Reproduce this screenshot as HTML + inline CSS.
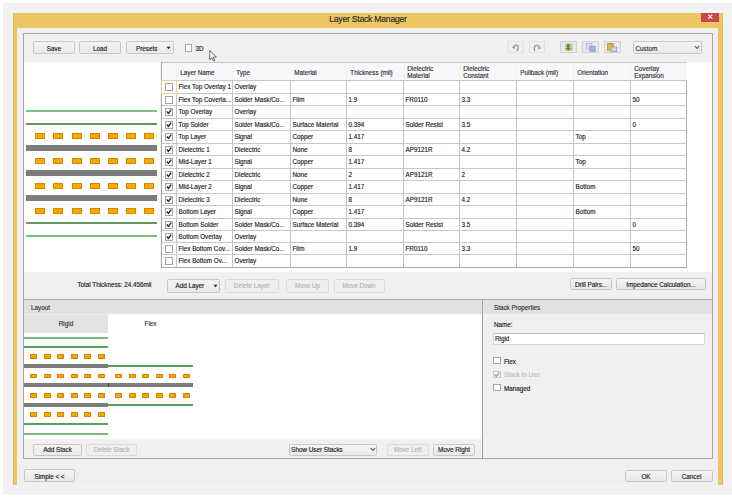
<!DOCTYPE html><html><head><meta charset="utf-8"><style>
*{margin:0;padding:0;box-sizing:border-box}
html,body{width:732px;height:501px;overflow:hidden;background:#fff;font-family:"Liberation Sans",sans-serif}
div{position:absolute}
.t{white-space:nowrap;font-size:6.3px;line-height:8px;color:#222;-webkit-text-stroke:0.15px currentColor}
</style></head><body>
<div style="left:3px;top:3px;width:729px;height:492px;background:#f2f2f2"></div>
<div style="left:13px;top:13px;width:710px;height:472px;background:#edc562"></div>
<div style="left:13px;top:13px;width:1px;height:472px;background:#dfb75d"></div>
<div style="left:722px;top:22px;width:1px;height:463px;background:#dfb75d"></div>
<div style="left:17px;top:28px;width:701px;height:457px;background:#f0f0f0"></div>
<div class="t" style="left:13px;top:14.5px;width:710px;text-align:center;font-size:8.6px;letter-spacing:-0.22px;line-height:9px;color:#2a2a2a">Layer Stack Manager</div>
<div style="left:701px;top:13px;width:18px;height:9px;background:#c9464c"></div>
<svg style="position:absolute;left:701px;top:13px" width="18" height="9" viewBox="0 0 18 9"><path d="M7.3 1.6 L11.3 5.6 M11.3 1.6 L7.3 5.6" stroke="#fff" stroke-width="1.2"/></svg>
<div style="left:33px;top:41px;width:42px;height:12.5px;border:1px solid #c8c8c8;background:linear-gradient(#f4f4f4,#e8e8e8);border-radius:1.5px"></div>
<div class="t" style="left:33px;width:42px;text-align:center;top:45px;color:#222">Save</div>
<div style="left:79px;top:41px;width:42px;height:12.5px;border:1px solid #c8c8c8;background:linear-gradient(#f4f4f4,#e8e8e8);border-radius:1.5px"></div>
<div class="t" style="left:79px;width:42px;text-align:center;top:45px;color:#222">Load</div>
<div style="left:125.5px;top:41px;width:48.5px;height:12.5px;border:1px solid #c8c8c8;background:linear-gradient(#f4f4f4,#e8e8e8);border-radius:1.5px"></div>
<div class="t" style="left:136px;top:45px;color:#222">Presets</div>
<svg style="position:absolute;left:166px;top:46px" width="5" height="4" viewBox="0 0 5 4"><path d="M0.5 0.8 L4.5 0.8 L2.5 3.2 Z" fill="#222"/></svg>
<div style="left:185px;top:44.2px;width:7.2px;height:7.5px;border:1px solid #a4a4a4;background:#fff"></div>
<div class="t" style="left:195.5px;top:45px;">3D</div>
<svg style="position:absolute;left:209px;top:48.5px" width="10" height="14" viewBox="0 0 10 14"><path d="M0.8 1.4 L0.8 10.8 L3 8.8 L4.6 12 L5.8 11.4 L4.3 8.2 L7.3 8 Z" fill="#fafafa" stroke="#3a3a3a" stroke-width="0.75"/></svg>
<div style="left:507px;top:41px;width:16.5px;height:12.3px;border:1px solid #e2e2e2;background:#efefef"></div>
<div style="left:528.5px;top:41px;width:16.5px;height:12.3px;border:1px solid #e2e2e2;background:#efefef"></div>
<svg style="position:absolute;left:507px;top:41px" width="17" height="12" viewBox="0 0 17 12"><path d="M7 5.4 C8.4 3.6 11.4 3.4 11.4 6.3 C11.4 8 10.8 9.1 9.7 10" fill="none" stroke="#999" stroke-width="1.4"/><path d="M4.9 6.6 L7.9 4.3 L8.1 8.1 Z" fill="#999"/></svg>
<svg style="position:absolute;left:528.5px;top:41px" width="17" height="12" viewBox="0 0 17 12"><path d="M5.9 10 C5 8.4 5 4.3 7.7 4.1 C9.4 4 10.1 5.1 10.5 6.2" fill="none" stroke="#999" stroke-width="1.4"/><path d="M11.6 8 L8.8 7.5 L11.1 4.7 Z" fill="#999"/></svg>
<div style="left:560px;top:41.2px;width:17px;height:12.2px;border:1px solid #d2d2d2;background:#e9e9e9"></div>
<div style="left:581.5px;top:41.2px;width:17px;height:12.2px;border:1px solid #d2d2d2;background:#e9e9e9"></div>
<div style="left:603.5px;top:41.2px;width:17px;height:12.2px;border:1px solid #d2d2d2;background:#e9e9e9"></div>
<svg style="position:absolute;left:560px;top:41.2px" width="17" height="12" viewBox="0 0 17 12"><rect x="5" y="2.3" width="7.5" height="7.6" fill="#c3d0de"/><rect x="9.2" y="2.6" width="3.2" height="2.6" fill="#e6c556"/><rect x="9.2" y="6.6" width="3.2" height="3" fill="#dcbc4c"/><rect x="5.2" y="6.8" width="2.4" height="2.8" fill="#e0c050"/><path d="M5.6 5.4 L8.2 2.4 L10.8 5.4 L9.3 5.4 L9.3 7 L10.8 7 L8.2 10 L5.6 7 L7.1 7 L7.1 5.4 Z" fill="#3d9c3d"/></svg>
<svg style="position:absolute;left:581.5px;top:41.2px" width="17" height="12" viewBox="0 0 17 12"><rect x="4.3" y="2.4" width="5.6" height="5.8" fill="#d4e0f4" stroke="#a4bade" stroke-width="0.7"/><rect x="7.8" y="5.2" width="5.4" height="5" fill="#98b8ea" stroke="#7094d0" stroke-width="0.7"/></svg>
<svg style="position:absolute;left:603.5px;top:41.2px" width="17" height="12" viewBox="0 0 17 12"><rect x="3.4" y="2.6" width="6.2" height="6.6" fill="#e6b636" stroke="#bb8e24" stroke-width="0.6"/><rect x="4.9" y="1.9" width="3.2" height="1.4" fill="#8d8d8d"/><rect x="7" y="6" width="5.8" height="4.4" fill="#d2dae8" stroke="#8392b0" stroke-width="0.7"/></svg>
<div style="left:633px;top:41px;width:69px;height:12.5px;border:1px solid #c8c8c8;background:linear-gradient(#f4f4f4,#e8e8e8);border-radius:1.5px"></div>
<div class="t" style="left:635.5px;top:45px;color:#333">Custom</div>
<svg style="position:absolute;left:694px;top:45.4px" width="6" height="5" viewBox="0 0 6 5"><path d="M0.8 1 L3 3.4 L5.2 1" fill="none" stroke="#555" stroke-width="1.1"/></svg>
<div style="left:24px;top:62px;width:688px;height:210px;background:#fff"></div>
<div style="left:159.5px;top:62px;width:1.5px;height:210px;background:#f6f6f6"></div>
<div style="left:26px;top:110px;width:130.5px;height:2px;background:#79c47a"></div>
<div style="left:26px;top:122.5px;width:130.5px;height:2px;background:#5d9b60"></div>
<div style="left:35px;top:133.2px;width:9.5px;height:6px;background:#ffa500;border:0.6px solid #cf8a00"></div>
<div style="left:53px;top:133.2px;width:9.5px;height:6px;background:#ffa500;border:0.6px solid #cf8a00"></div>
<div style="left:72px;top:133.2px;width:9.5px;height:6px;background:#ffa500;border:0.6px solid #cf8a00"></div>
<div style="left:90px;top:133.2px;width:9.5px;height:6px;background:#ffa500;border:0.6px solid #cf8a00"></div>
<div style="left:108px;top:133.2px;width:9.5px;height:6px;background:#ffa500;border:0.6px solid #cf8a00"></div>
<div style="left:126px;top:133.2px;width:9.5px;height:6px;background:#ffa500;border:0.6px solid #cf8a00"></div>
<div style="left:144px;top:133.2px;width:9.5px;height:6px;background:#ffa500;border:0.6px solid #cf8a00"></div>
<div style="left:35px;top:158px;width:9.5px;height:6px;background:#ffa500;border:0.6px solid #cf8a00"></div>
<div style="left:53px;top:158px;width:9.5px;height:6px;background:#ffa500;border:0.6px solid #cf8a00"></div>
<div style="left:72px;top:158px;width:9.5px;height:6px;background:#ffa500;border:0.6px solid #cf8a00"></div>
<div style="left:90px;top:158px;width:9.5px;height:6px;background:#ffa500;border:0.6px solid #cf8a00"></div>
<div style="left:108px;top:158px;width:9.5px;height:6px;background:#ffa500;border:0.6px solid #cf8a00"></div>
<div style="left:126px;top:158px;width:9.5px;height:6px;background:#ffa500;border:0.6px solid #cf8a00"></div>
<div style="left:144px;top:158px;width:9.5px;height:6px;background:#ffa500;border:0.6px solid #cf8a00"></div>
<div style="left:35px;top:183px;width:9.5px;height:6px;background:#ffa500;border:0.6px solid #cf8a00"></div>
<div style="left:53px;top:183px;width:9.5px;height:6px;background:#ffa500;border:0.6px solid #cf8a00"></div>
<div style="left:72px;top:183px;width:9.5px;height:6px;background:#ffa500;border:0.6px solid #cf8a00"></div>
<div style="left:90px;top:183px;width:9.5px;height:6px;background:#ffa500;border:0.6px solid #cf8a00"></div>
<div style="left:108px;top:183px;width:9.5px;height:6px;background:#ffa500;border:0.6px solid #cf8a00"></div>
<div style="left:126px;top:183px;width:9.5px;height:6px;background:#ffa500;border:0.6px solid #cf8a00"></div>
<div style="left:144px;top:183px;width:9.5px;height:6px;background:#ffa500;border:0.6px solid #cf8a00"></div>
<div style="left:35px;top:207.8px;width:9.5px;height:6px;background:#ffa500;border:0.6px solid #cf8a00"></div>
<div style="left:53px;top:207.8px;width:9.5px;height:6px;background:#ffa500;border:0.6px solid #cf8a00"></div>
<div style="left:72px;top:207.8px;width:9.5px;height:6px;background:#ffa500;border:0.6px solid #cf8a00"></div>
<div style="left:90px;top:207.8px;width:9.5px;height:6px;background:#ffa500;border:0.6px solid #cf8a00"></div>
<div style="left:108px;top:207.8px;width:9.5px;height:6px;background:#ffa500;border:0.6px solid #cf8a00"></div>
<div style="left:126px;top:207.8px;width:9.5px;height:6px;background:#ffa500;border:0.6px solid #cf8a00"></div>
<div style="left:144px;top:207.8px;width:9.5px;height:6px;background:#ffa500;border:0.6px solid #cf8a00"></div>
<div style="left:26px;top:145.3px;width:130.5px;height:6px;background:#7c7c7c"></div>
<div style="left:26px;top:170.1px;width:130.5px;height:6px;background:#7c7c7c"></div>
<div style="left:26px;top:195.3px;width:130.5px;height:6px;background:#7c7c7c"></div>
<div style="left:26px;top:222px;width:130.5px;height:2px;background:#5d9b60"></div>
<div style="left:26px;top:234.7px;width:130.5px;height:2px;background:#79c47a"></div>
<div style="left:161px;top:62px;width:526px;height:18px;background:#f8f8fa"></div>
<div style="left:176px;top:62px;width:1px;height:18px;background:#efeff4"></div>
<div style="left:232px;top:62px;width:1px;height:18px;background:#efeff4"></div>
<div style="left:290px;top:62px;width:1px;height:18px;background:#efeff4"></div>
<div style="left:346px;top:62px;width:1px;height:18px;background:#efeff4"></div>
<div style="left:403px;top:62px;width:1px;height:18px;background:#efeff4"></div>
<div style="left:459px;top:62px;width:1px;height:18px;background:#efeff4"></div>
<div style="left:516px;top:62px;width:1px;height:18px;background:#efeff4"></div>
<div style="left:573px;top:62px;width:1px;height:18px;background:#efeff4"></div>
<div style="left:630px;top:62px;width:1px;height:18px;background:#efeff4"></div>
<div style="left:161px;top:62px;width:526px;height:1px;background:#c9c9c9"></div>
<div style="left:161px;top:80px;width:526px;height:1px;background:#c6c6ce"></div>
<div style="left:176px;top:81px;width:1px;height:186px;background:#c4c4c4"></div>
<div style="left:232px;top:81px;width:1px;height:186px;background:#c4c4c4"></div>
<div style="left:290px;top:81px;width:1px;height:186px;background:#c4c4c4"></div>
<div style="left:346px;top:81px;width:1px;height:186px;background:#c4c4c4"></div>
<div style="left:403px;top:81px;width:1px;height:186px;background:#c4c4c4"></div>
<div style="left:459px;top:81px;width:1px;height:186px;background:#c4c4c4"></div>
<div style="left:516px;top:81px;width:1px;height:186px;background:#c4c4c4"></div>
<div style="left:573px;top:81px;width:1px;height:186px;background:#c4c4c4"></div>
<div style="left:630px;top:81px;width:1px;height:186px;background:#c4c4c4"></div>
<div style="left:161px;top:93px;width:526px;height:1px;background:#c8c8c8"></div>
<div style="left:161px;top:105px;width:526px;height:1px;background:#c8c8c8"></div>
<div style="left:161px;top:118px;width:526px;height:1px;background:#c8c8c8"></div>
<div style="left:161px;top:130px;width:526px;height:1px;background:#c8c8c8"></div>
<div style="left:161px;top:143px;width:526px;height:1px;background:#c8c8c8"></div>
<div style="left:161px;top:155px;width:526px;height:1px;background:#c8c8c8"></div>
<div style="left:161px;top:168px;width:526px;height:1px;background:#c8c8c8"></div>
<div style="left:161px;top:180px;width:526px;height:1px;background:#c8c8c8"></div>
<div style="left:161px;top:193px;width:526px;height:1px;background:#c8c8c8"></div>
<div style="left:161px;top:205px;width:526px;height:1px;background:#c8c8c8"></div>
<div style="left:161px;top:218px;width:526px;height:1px;background:#c8c8c8"></div>
<div style="left:161px;top:230px;width:526px;height:1px;background:#c8c8c8"></div>
<div style="left:161px;top:242px;width:526px;height:1px;background:#c8c8c8"></div>
<div style="left:161px;top:254px;width:526px;height:1px;background:#c8c8c8"></div>
<div style="left:161px;top:62px;width:1px;height:206px;background:#a6a6a6"></div>
<div style="left:686px;top:80px;width:1px;height:188px;background:#b0b0b0"></div>
<div style="left:161px;top:267px;width:526px;height:1px;background:#aaaaaa"></div>
<div class="t" style="left:180.3px;top:69px;color:#333">Layer Name</div>
<div class="t" style="left:236.3px;top:69px;color:#333">Type</div>
<div class="t" style="left:294.3px;top:69px;color:#333">Material</div>
<div class="t" style="left:350.3px;top:69px;color:#333">Thickness (mil)</div>
<div class="t" style="left:407.3px;top:65px;line-height:7.4px;color:#333">Dielectric<br>Material</div>
<div class="t" style="left:463.3px;top:65px;line-height:7.4px;color:#333">Dielectric<br>Constant</div>
<div class="t" style="left:520.3px;top:69px;color:#333">Pullback (mil)</div>
<div class="t" style="left:577.3px;top:69px;color:#333">Orientation</div>
<div class="t" style="left:634.3px;top:65px;line-height:7.4px;color:#333">Coverlay<br>Expansion</div>
<div style="left:161px;top:80px;width:16px;height:14px;border:1px solid #ebd493"></div>
<div style="left:165px;top:83px;width:7.5px;height:7.5px;border:1px solid #a4a4a4;background:#fff"></div>
<div class="t" style="left:178.5px;top:83px;">Flex Top Overlay 1</div>
<div class="t" style="left:234.5px;top:83px;">Overlay</div>
<div style="left:165px;top:96px;width:7.5px;height:7.5px;border:1px solid #a4a4a4;background:#fff"></div>
<div class="t" style="left:178.5px;top:96px;">Flex Top Coverla...</div>
<div class="t" style="left:234.5px;top:96px;">Solder Mask/Co...</div>
<div class="t" style="left:292.5px;top:96px;">Film</div>
<div class="t" style="left:348.5px;top:96px;">1.9</div>
<div class="t" style="left:405.5px;top:96px;">FR0110</div>
<div class="t" style="left:461.5px;top:96px;">3.3</div>
<div class="t" style="left:632.5px;top:96px;">50</div>
<div style="left:165px;top:108px;width:7.5px;height:7.5px;border:1px solid #a4a4a4;background:#fff"></div>
<svg style="position:absolute;left:165px;top:108px" width="8" height="8" viewBox="0 0 8 8"><path d="M1.8 3.6 L3.4 5.3 L6.2 1.6" fill="none" stroke="#2a2a2a" stroke-width="1.4"/></svg>
<div class="t" style="left:178.5px;top:108px;">Top Overlay</div>
<div class="t" style="left:234.5px;top:108px;">Overlay</div>
<div style="left:165px;top:121px;width:7.5px;height:7.5px;border:1px solid #a4a4a4;background:#fff"></div>
<svg style="position:absolute;left:165px;top:121px" width="8" height="8" viewBox="0 0 8 8"><path d="M1.8 3.6 L3.4 5.3 L6.2 1.6" fill="none" stroke="#2a2a2a" stroke-width="1.4"/></svg>
<div class="t" style="left:178.5px;top:121px;">Top Solder</div>
<div class="t" style="left:234.5px;top:121px;">Solder Mask/Co...</div>
<div class="t" style="left:292.5px;top:121px;">Surface Material</div>
<div class="t" style="left:348.5px;top:121px;">0.394</div>
<div class="t" style="left:405.5px;top:121px;">Solder Resist</div>
<div class="t" style="left:461.5px;top:121px;">3.5</div>
<div class="t" style="left:632.5px;top:121px;">0</div>
<div style="left:165px;top:133px;width:7.5px;height:7.5px;border:1px solid #a4a4a4;background:#fff"></div>
<svg style="position:absolute;left:165px;top:133px" width="8" height="8" viewBox="0 0 8 8"><path d="M1.8 3.6 L3.4 5.3 L6.2 1.6" fill="none" stroke="#2a2a2a" stroke-width="1.4"/></svg>
<div class="t" style="left:178.5px;top:133px;">Top Layer</div>
<div class="t" style="left:234.5px;top:133px;">Signal</div>
<div class="t" style="left:292.5px;top:133px;">Copper</div>
<div class="t" style="left:348.5px;top:133px;">1.417</div>
<div class="t" style="left:575.5px;top:133px;">Top</div>
<div style="left:165px;top:146px;width:7.5px;height:7.5px;border:1px solid #a4a4a4;background:#fff"></div>
<svg style="position:absolute;left:165px;top:146px" width="8" height="8" viewBox="0 0 8 8"><path d="M1.8 3.6 L3.4 5.3 L6.2 1.6" fill="none" stroke="#2a2a2a" stroke-width="1.4"/></svg>
<div class="t" style="left:178.5px;top:146px;">Dielectric 1</div>
<div class="t" style="left:234.5px;top:146px;">Dielectric</div>
<div class="t" style="left:292.5px;top:146px;">None</div>
<div class="t" style="left:348.5px;top:146px;">8</div>
<div class="t" style="left:405.5px;top:146px;">AP9121R</div>
<div class="t" style="left:461.5px;top:146px;">4.2</div>
<div style="left:165px;top:158px;width:7.5px;height:7.5px;border:1px solid #a4a4a4;background:#fff"></div>
<svg style="position:absolute;left:165px;top:158px" width="8" height="8" viewBox="0 0 8 8"><path d="M1.8 3.6 L3.4 5.3 L6.2 1.6" fill="none" stroke="#2a2a2a" stroke-width="1.4"/></svg>
<div class="t" style="left:178.5px;top:158px;">Mid-Layer 1</div>
<div class="t" style="left:234.5px;top:158px;">Signal</div>
<div class="t" style="left:292.5px;top:158px;">Copper</div>
<div class="t" style="left:348.5px;top:158px;">1.417</div>
<div class="t" style="left:575.5px;top:158px;">Top</div>
<div style="left:165px;top:171px;width:7.5px;height:7.5px;border:1px solid #a4a4a4;background:#fff"></div>
<svg style="position:absolute;left:165px;top:171px" width="8" height="8" viewBox="0 0 8 8"><path d="M1.8 3.6 L3.4 5.3 L6.2 1.6" fill="none" stroke="#2a2a2a" stroke-width="1.4"/></svg>
<div class="t" style="left:178.5px;top:171px;">Dielectric 2</div>
<div class="t" style="left:234.5px;top:171px;">Dielectric</div>
<div class="t" style="left:292.5px;top:171px;">None</div>
<div class="t" style="left:348.5px;top:171px;">2</div>
<div class="t" style="left:405.5px;top:171px;">AP9121R</div>
<div class="t" style="left:461.5px;top:171px;">2</div>
<div style="left:165px;top:183px;width:7.5px;height:7.5px;border:1px solid #a4a4a4;background:#fff"></div>
<svg style="position:absolute;left:165px;top:183px" width="8" height="8" viewBox="0 0 8 8"><path d="M1.8 3.6 L3.4 5.3 L6.2 1.6" fill="none" stroke="#2a2a2a" stroke-width="1.4"/></svg>
<div class="t" style="left:178.5px;top:183px;">Mid-Layer 2</div>
<div class="t" style="left:234.5px;top:183px;">Signal</div>
<div class="t" style="left:292.5px;top:183px;">Copper</div>
<div class="t" style="left:348.5px;top:183px;">1.417</div>
<div class="t" style="left:575.5px;top:183px;">Bottom</div>
<div style="left:165px;top:196px;width:7.5px;height:7.5px;border:1px solid #a4a4a4;background:#fff"></div>
<svg style="position:absolute;left:165px;top:196px" width="8" height="8" viewBox="0 0 8 8"><path d="M1.8 3.6 L3.4 5.3 L6.2 1.6" fill="none" stroke="#2a2a2a" stroke-width="1.4"/></svg>
<div class="t" style="left:178.5px;top:196px;">Dielectric 3</div>
<div class="t" style="left:234.5px;top:196px;">Dielectric</div>
<div class="t" style="left:292.5px;top:196px;">None</div>
<div class="t" style="left:348.5px;top:196px;">8</div>
<div class="t" style="left:405.5px;top:196px;">AP9121R</div>
<div class="t" style="left:461.5px;top:196px;">4.2</div>
<div style="left:165px;top:208px;width:7.5px;height:7.5px;border:1px solid #a4a4a4;background:#fff"></div>
<svg style="position:absolute;left:165px;top:208px" width="8" height="8" viewBox="0 0 8 8"><path d="M1.8 3.6 L3.4 5.3 L6.2 1.6" fill="none" stroke="#2a2a2a" stroke-width="1.4"/></svg>
<div class="t" style="left:178.5px;top:208px;">Bottom Layer</div>
<div class="t" style="left:234.5px;top:208px;">Signal</div>
<div class="t" style="left:292.5px;top:208px;">Copper</div>
<div class="t" style="left:348.5px;top:208px;">1.417</div>
<div class="t" style="left:575.5px;top:208px;">Bottom</div>
<div style="left:165px;top:221px;width:7.5px;height:7.5px;border:1px solid #a4a4a4;background:#fff"></div>
<svg style="position:absolute;left:165px;top:221px" width="8" height="8" viewBox="0 0 8 8"><path d="M1.8 3.6 L3.4 5.3 L6.2 1.6" fill="none" stroke="#2a2a2a" stroke-width="1.4"/></svg>
<div class="t" style="left:178.5px;top:221px;">Bottom Solder</div>
<div class="t" style="left:234.5px;top:221px;">Solder Mask/Co...</div>
<div class="t" style="left:292.5px;top:221px;">Surface Material</div>
<div class="t" style="left:348.5px;top:221px;">0.394</div>
<div class="t" style="left:405.5px;top:221px;">Solder Resist</div>
<div class="t" style="left:461.5px;top:221px;">3.5</div>
<div class="t" style="left:632.5px;top:221px;">0</div>
<div style="left:165px;top:233px;width:7.5px;height:7.5px;border:1px solid #a4a4a4;background:#fff"></div>
<svg style="position:absolute;left:165px;top:233px" width="8" height="8" viewBox="0 0 8 8"><path d="M1.8 3.6 L3.4 5.3 L6.2 1.6" fill="none" stroke="#2a2a2a" stroke-width="1.4"/></svg>
<div class="t" style="left:178.5px;top:233px;">Bottom Overlay</div>
<div class="t" style="left:234.5px;top:233px;">Overlay</div>
<div style="left:165px;top:245px;width:7.5px;height:7.5px;border:1px solid #a4a4a4;background:#fff"></div>
<div class="t" style="left:178.5px;top:245px;">Flex Bottom Cov...</div>
<div class="t" style="left:234.5px;top:245px;">Solder Mask/Co...</div>
<div class="t" style="left:292.5px;top:245px;">Film</div>
<div class="t" style="left:348.5px;top:245px;">1.9</div>
<div class="t" style="left:405.5px;top:245px;">FR0110</div>
<div class="t" style="left:461.5px;top:245px;">3.3</div>
<div class="t" style="left:632.5px;top:245px;">50</div>
<div style="left:165px;top:257px;width:7.5px;height:7.5px;border:1px solid #a4a4a4;background:#fff"></div>
<div class="t" style="left:178.5px;top:257px;">Flex Bottom Ov...</div>
<div class="t" style="left:234.5px;top:257px;">Overlay</div>
<div class="t" style="left:60px;top:281px;width:91.5px;text-align:right">Total Thickness: 24.456mil</div>
<div style="left:167px;top:279px;width:53px;height:13.5px;border:1px solid #c8c8c8;background:linear-gradient(#f4f4f4,#e8e8e8);border-radius:1.5px"></div>
<div class="t" style="left:175.5px;top:282px;color:#222">Add Layer</div>
<svg style="position:absolute;left:212.5px;top:284px" width="5" height="4" viewBox="0 0 5 4"><path d="M0.5 0.8 L4.5 0.8 L2.5 3.2 Z" fill="#222"/></svg>
<div style="left:224.5px;top:279px;width:54.5px;height:13.5px;border:1px solid #dcdcdc;background:#efefef;border-radius:1.5px"></div>
<div class="t" style="left:224.5px;width:54.5px;text-align:center;top:282px;color:#b6b6b6">Delete Layer</div>
<div style="left:286px;top:279px;width:43px;height:13.5px;border:1px solid #dcdcdc;background:#efefef;border-radius:1.5px"></div>
<div class="t" style="left:286px;width:43px;text-align:center;top:282px;color:#b6b6b6">Move Up</div>
<div style="left:333.5px;top:279px;width:51px;height:13.5px;border:1px solid #dcdcdc;background:#efefef;border-radius:1.5px"></div>
<div class="t" style="left:333.5px;width:51px;text-align:center;top:282px;color:#b6b6b6">Move Down</div>
<div style="left:570px;top:278px;width:42px;height:12.3px;border:1px solid #c8c8c8;background:linear-gradient(#f4f4f4,#e8e8e8);border-radius:1.5px"></div>
<div class="t" style="left:570px;width:42px;text-align:center;top:281px;color:#222">Drill Pairs...</div>
<div style="left:616px;top:278px;width:90px;height:12.3px;border:1px solid #c8c8c8;background:linear-gradient(#f4f4f4,#e8e8e8);border-radius:1.5px"></div>
<div class="t" style="left:616px;width:90px;text-align:center;top:281px;color:#222">Impedance Calculation...</div>
<div style="left:24px;top:299px;width:688.5px;height:1px;background:#a3a3a3"></div>
<div style="left:24px;top:300px;width:458px;height:13.5px;background:#e1e1e1"></div>
<div class="t" style="left:31px;top:304px;color:#333">Layout</div>
<div style="left:24px;top:313.5px;width:458px;height:1px;background:#ececec"></div>
<div style="left:24px;top:314.5px;width:84px;height:18px;background:#e3e3e3"></div>
<div class="t" style="left:24px;width:84px;text-align:center;top:320px;color:#333">Rigid</div>
<div style="left:108px;top:313.5px;width:374px;height:125px;background:#fff"></div>
<div style="left:24px;top:332.5px;width:84px;height:106px;background:#fff"></div>
<div class="t" style="left:108px;width:85px;text-align:center;top:320px;color:#333">Flex</div>
<div style="left:24px;top:337px;width:84px;height:1.6px;background:#7cb87d"></div>
<div style="left:24px;top:346px;width:84px;height:2px;background:#5e9d61"></div>
<div style="left:30px;top:354.2px;width:7px;height:4.8px;background:#ffa500;border:0.6px solid #cf8a00"></div>
<div style="left:44px;top:354.2px;width:7px;height:4.8px;background:#ffa500;border:0.6px solid #cf8a00"></div>
<div style="left:57px;top:354.2px;width:7px;height:4.8px;background:#ffa500;border:0.6px solid #cf8a00"></div>
<div style="left:71px;top:354.2px;width:7px;height:4.8px;background:#ffa500;border:0.6px solid #cf8a00"></div>
<div style="left:84px;top:354.2px;width:7px;height:4.8px;background:#ffa500;border:0.6px solid #cf8a00"></div>
<div style="left:98px;top:354.2px;width:7px;height:4.8px;background:#ffa500;border:0.6px solid #cf8a00"></div>
<div style="left:30px;top:373.5px;width:7px;height:4.8px;background:#ffa500;border:0.6px solid #cf8a00"></div>
<div style="left:44px;top:373.5px;width:7px;height:4.8px;background:#ffa500;border:0.6px solid #cf8a00"></div>
<div style="left:57px;top:373.5px;width:7px;height:4.8px;background:#ffa500;border:0.6px solid #cf8a00"></div>
<div style="left:71px;top:373.5px;width:7px;height:4.8px;background:#ffa500;border:0.6px solid #cf8a00"></div>
<div style="left:84px;top:373.5px;width:7px;height:4.8px;background:#ffa500;border:0.6px solid #cf8a00"></div>
<div style="left:98px;top:373.5px;width:7px;height:4.8px;background:#ffa500;border:0.6px solid #cf8a00"></div>
<div style="left:30px;top:393px;width:7px;height:4.8px;background:#ffa500;border:0.6px solid #cf8a00"></div>
<div style="left:44px;top:393px;width:7px;height:4.8px;background:#ffa500;border:0.6px solid #cf8a00"></div>
<div style="left:57px;top:393px;width:7px;height:4.8px;background:#ffa500;border:0.6px solid #cf8a00"></div>
<div style="left:71px;top:393px;width:7px;height:4.8px;background:#ffa500;border:0.6px solid #cf8a00"></div>
<div style="left:84px;top:393px;width:7px;height:4.8px;background:#ffa500;border:0.6px solid #cf8a00"></div>
<div style="left:98px;top:393px;width:7px;height:4.8px;background:#ffa500;border:0.6px solid #cf8a00"></div>
<div style="left:30px;top:412.3px;width:7px;height:4.8px;background:#ffa500;border:0.6px solid #cf8a00"></div>
<div style="left:44px;top:412.3px;width:7px;height:4.8px;background:#ffa500;border:0.6px solid #cf8a00"></div>
<div style="left:57px;top:412.3px;width:7px;height:4.8px;background:#ffa500;border:0.6px solid #cf8a00"></div>
<div style="left:71px;top:412.3px;width:7px;height:4.8px;background:#ffa500;border:0.6px solid #cf8a00"></div>
<div style="left:84px;top:412.3px;width:7px;height:4.8px;background:#ffa500;border:0.6px solid #cf8a00"></div>
<div style="left:98px;top:412.3px;width:7px;height:4.8px;background:#ffa500;border:0.6px solid #cf8a00"></div>
<div style="left:115px;top:373.5px;width:7px;height:4.8px;background:#ffa500;border:0.6px solid #cf8a00"></div>
<div style="left:129px;top:373.5px;width:7px;height:4.8px;background:#ffa500;border:0.6px solid #cf8a00"></div>
<div style="left:142px;top:373.5px;width:7px;height:4.8px;background:#ffa500;border:0.6px solid #cf8a00"></div>
<div style="left:156px;top:373.5px;width:7px;height:4.8px;background:#ffa500;border:0.6px solid #cf8a00"></div>
<div style="left:169px;top:373.5px;width:7px;height:4.8px;background:#ffa500;border:0.6px solid #cf8a00"></div>
<div style="left:183px;top:373.5px;width:7px;height:4.8px;background:#ffa500;border:0.6px solid #cf8a00"></div>
<div style="left:115px;top:393px;width:7px;height:4.8px;background:#ffa500;border:0.6px solid #cf8a00"></div>
<div style="left:129px;top:393px;width:7px;height:4.8px;background:#ffa500;border:0.6px solid #cf8a00"></div>
<div style="left:142px;top:393px;width:7px;height:4.8px;background:#ffa500;border:0.6px solid #cf8a00"></div>
<div style="left:156px;top:393px;width:7px;height:4.8px;background:#ffa500;border:0.6px solid #cf8a00"></div>
<div style="left:169px;top:393px;width:7px;height:4.8px;background:#ffa500;border:0.6px solid #cf8a00"></div>
<div style="left:183px;top:393px;width:7px;height:4.8px;background:#ffa500;border:0.6px solid #cf8a00"></div>
<div style="left:24px;top:364px;width:84px;height:4px;background:#7c7c7c"></div>
<div style="left:24px;top:383.3px;width:169px;height:4px;background:#7c7c7c"></div>
<div style="left:24px;top:402.5px;width:84px;height:4px;background:#7c7c7c"></div>
<div style="left:108px;top:365px;width:85px;height:2px;background:#5e9d61"></div>
<div style="left:108px;top:404px;width:85px;height:2px;background:#5e9d61"></div>
<div style="left:107.5px;top:383.3px;width:1px;height:4px;background:#444"></div>
<div style="left:24px;top:423px;width:84px;height:2px;background:#5e9d61"></div>
<div style="left:24px;top:433px;width:84px;height:1.6px;background:#7cb87d"></div>
<div style="left:33px;top:444px;width:49px;height:12px;border:1px solid #c8c8c8;background:linear-gradient(#f4f4f4,#e8e8e8);border-radius:1.5px"></div>
<div class="t" style="left:33px;width:49px;text-align:center;top:446px;color:#222">Add Stack</div>
<div style="left:86px;top:444px;width:51px;height:12px;border:1px solid #dcdcdc;background:#efefef;border-radius:1.5px"></div>
<div class="t" style="left:86px;width:51px;text-align:center;top:446px;color:#b6b6b6">Delete Stack</div>
<div style="left:289px;top:443.5px;width:88px;height:12px;border:1px solid #c8c8c8;background:linear-gradient(#f6f6f6,#eaeaea);border-radius:1.5px"></div>
<div class="t" style="left:291.3px;top:446px;color:#222">Show User Stacks</div>
<svg style="position:absolute;left:369.8px;top:447.3px" width="6" height="5" viewBox="0 0 6 5"><path d="M0.8 1 L3 3.4 L5.2 1" fill="none" stroke="#555" stroke-width="1.1"/></svg>
<div style="left:387px;top:444px;width:41.5px;height:11.5px;border:1px solid #dcdcdc;background:#efefef;border-radius:1.5px"></div>
<div class="t" style="left:387px;width:41.5px;text-align:center;top:446px;color:#b6b6b6">Move Left</div>
<div style="left:433px;top:444px;width:42px;height:11.5px;border:1px solid #c8c8c8;background:linear-gradient(#f4f4f4,#e8e8e8);border-radius:1.5px"></div>
<div class="t" style="left:433px;width:42px;text-align:center;top:446px;color:#222">Move Right</div>
<div style="left:482px;top:300px;width:1px;height:158px;background:#a3a3a3"></div>
<div style="left:483px;top:300px;width:229.5px;height:14px;background:#e1e1e1"></div>
<div class="t" style="left:494px;top:304px;color:#333">Stack Properties</div>
<div class="t" style="left:494px;top:321px;">Name:</div>
<div style="left:493px;top:332.5px;width:211.5px;height:12px;background:#fff;border:1px solid #d8d8d8;border-top-color:#bcbcbc"></div>
<div class="t" style="left:495px;top:335px;">Rigid</div>
<div style="left:493.3px;top:357px;width:7.5px;height:7.3px;border:1px solid #a4a4a4;background:#fff"></div>
<div class="t" style="left:504px;top:357.5px;">Flex</div>
<div style="left:493.3px;top:371px;width:7.5px;height:7px;border:1px solid #cacaca;background:#f3f3f3"></div>
<svg style="position:absolute;left:493.3px;top:371px" width="8" height="8" viewBox="0 0 8 8"><path d="M1.8 3.6 L3.4 5.3 L6.2 1.6" fill="none" stroke="#a2a2a2" stroke-width="1.4"/></svg>
<div class="t" style="left:504px;top:371px;color:#c0c0c0">Stack In Use</div>
<div style="left:493.3px;top:384px;width:7.5px;height:7.3px;border:1px solid #a4a4a4;background:#fff"></div>
<div class="t" style="left:504px;top:384.5px;">Managed</div>
<div style="left:23px;top:33px;width:690px;height:426px;border:1px solid #a6a6a6"></div>
<div style="left:24px;top:469.3px;width:51px;height:12.3px;border:1px solid #c8c8c8;background:linear-gradient(#f4f4f4,#e8e8e8);border-radius:1.5px"></div>
<div class="t" style="left:24px;width:51px;text-align:center;top:473px;color:#222">Simple &lt; &lt;</div>
<div style="left:625px;top:470px;width:42px;height:11.8px;border:1px solid #c8c8c8;background:linear-gradient(#f4f4f4,#e8e8e8);border-radius:1.5px"></div>
<div class="t" style="left:625px;width:42px;text-align:center;top:473px;color:#222">OK</div>
<div style="left:670.5px;top:470px;width:42px;height:11.8px;border:1px solid #c8c8c8;background:linear-gradient(#f4f4f4,#e8e8e8);border-radius:1.5px"></div>
<div class="t" style="left:670.5px;width:42px;text-align:center;top:473px;color:#222">Cancel</div>
</body></html>
